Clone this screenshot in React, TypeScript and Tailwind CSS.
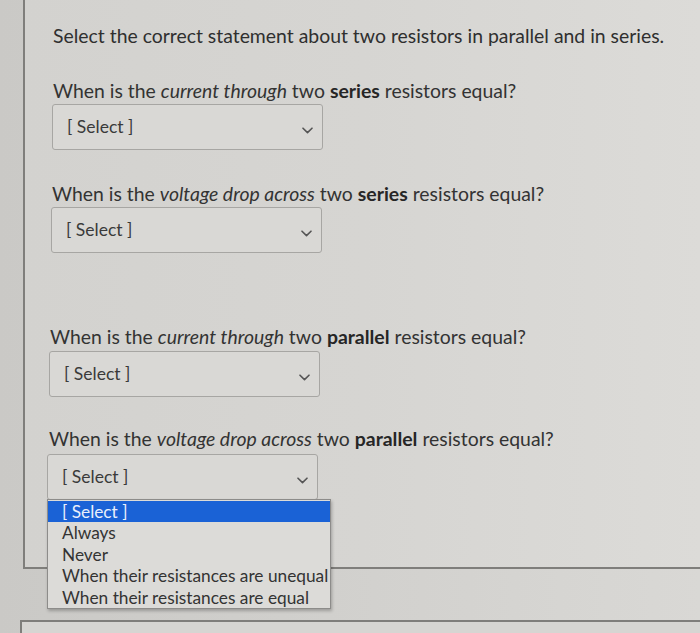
const OPTIONS = ['[ Select ]', 'Always', 'Never', 'When their resistances are unequal', 'When their resistances are equal']

const QUESTIONS = [
  { em: 'current through', strong: 'series', qGap: 'mt-[31px] ml-[28px]', sGap: 'mt-[1px] ml-[27px]', open: false },
  { em: 'voltage drop across', strong: 'series', qGap: 'mt-[32px] ml-[27px]', sGap: 'mt-[1px] ml-[26px]', open: false },
  { em: 'current through', strong: 'parallel', qGap: 'mt-[72px] ml-[25px]', sGap: 'mt-[2px] ml-[24px]', open: false },
  { em: 'voltage drop across', strong: 'parallel', qGap: 'mt-[30px] ml-[24px]', sGap: 'mt-[3px] ml-[22px]', open: true },
]

function Chevron() {
  return (
    <svg width="11" height="7" viewBox="0 0 11 7" className="mt-[6px]">
      <path d="M1 1.2 L5.5 5.6 L10 1.2" fill="none" stroke="#555" strokeWidth="1.6" strokeLinecap="round" strokeLinejoin="round" />
    </svg>
  )
}

function FakeSelect({ open }: { open: boolean }) {
  return (
    <div className="relative w-[271px]">
      <div className="flex h-[46px] items-center justify-between rounded-[3px] border border-[#a7a6a3] bg-[#d9d8d5] pl-[14px] pr-[9px]">
        <span className="text-[17.5px] leading-[20px] text-[#3a3a3a]">[ Select ]</span>
        <Chevron />
      </div>
      {open && (
        <div className="absolute left-0 top-[45px] z-10 w-[284px] border border-[#8d8c8a] bg-[#dcdbd8] pt-px shadow-[1px_2px_3px_rgba(0,0,0,0.25)]">
          {OPTIONS.map((opt, i) => (
            <div
              key={opt}
              className={`pl-[14px] text-[17.3px] leading-[21.4px] ${i === 0 ? 'bg-[#1a62d6] text-[#e9effb]' : 'text-[#333]'}`}
            >
              {opt}
            </div>
          ))}
        </div>
      )}
    </div>
  )
}

export default function App() {
  return (
    <div className="h-[633px] w-[700px] overflow-hidden bg-linear-to-r from-[#cac9c6] to-[#d9d8d5] font-['Lato',sans-serif] text-[#333]">
      <div className="ml-[23px] h-[569px] border-b-2 border-l-2 border-[#7f7e7b] bg-linear-to-r from-[#d3d2cf] via-[#d6d5d2] to-[#dcdbd8] pt-[24px]">
        <h1 className="ml-[28px] text-[19.4px] leading-[24px] text-[#2f2f2f]">
          Select the correct statement about two resistors in parallel and in series.
        </h1>

        {QUESTIONS.map((q, i) => (
          <div key={i}>
            <p className={`${q.qGap} text-[19.4px] leading-[24px] text-[#333]`}>
              When is the <em>{q.em}</em> two <strong className="font-bold text-[#262626]">{q.strong}</strong> resistors equal?
            </p>
            <div className={q.sGap}>
              <FakeSelect open={q.open} />
            </div>
          </div>
        ))}
      </div>

      <div className="ml-[20px] mt-[51px] h-[40px] border-l-2 border-t-2 border-[#7f7e7b] bg-[#d6d5d2]" />
    </div>
  )
}
